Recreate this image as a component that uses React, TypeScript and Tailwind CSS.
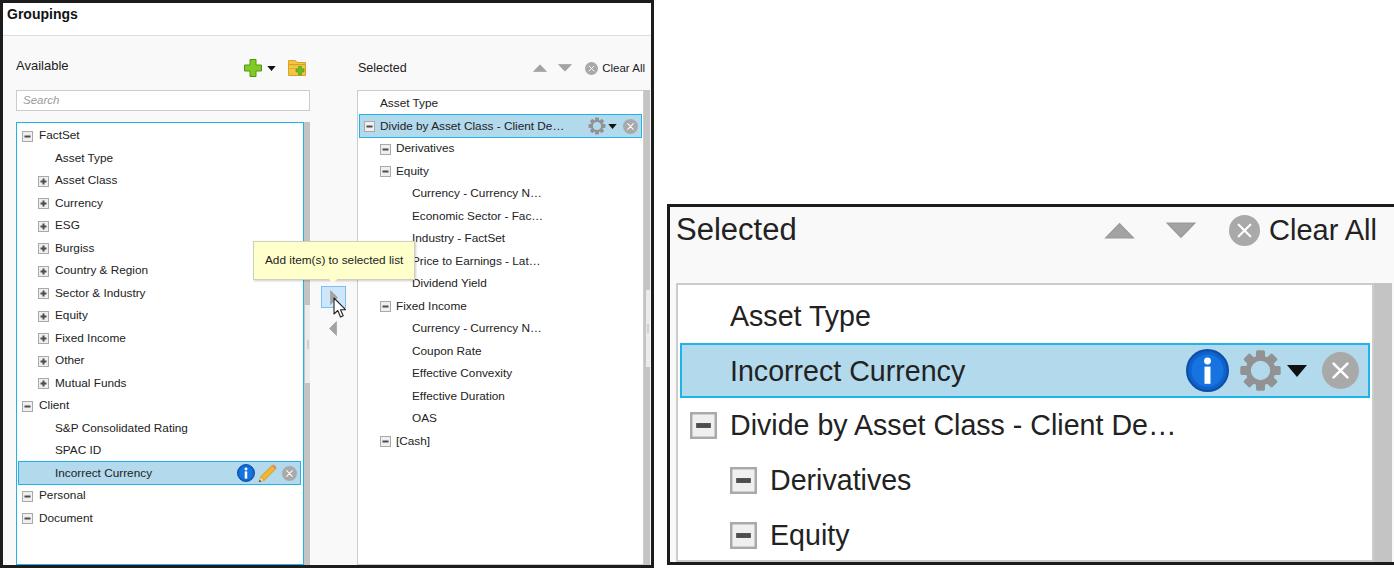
import React from "react";

function Toggle({ open, size = 11 }: { open?: boolean; size?: number }) {
  return (
    <svg width={size} height={size} viewBox="0 0 11 11" className="shrink-0">
      <rect x="0.5" y="0.5" width="10" height="10" fill="#efefef" stroke="#a9a9a9" />
      <rect x="2.5" y="4.5" width="6" height="2" fill="#4d4d4d" />
      {open ? <rect x="4.5" y="2.5" width="2" height="6" fill="#4d4d4d" /> : null}
    </svg>
  );
}

function CloseCircle({ size, fill = "#a9a9a9" }: { size: number; fill?: string }) {
  return (
    <svg width={size} height={size} viewBox="0 0 16 16" className="shrink-0">
      <circle cx="8" cy="8" r="8" fill={fill} />
      <path d="M5 5l6 6M11 5l-6 6" stroke="#fff" strokeWidth="1.1" strokeLinecap="round" />
    </svg>
  );
}

function Info({ size }: { size: number }) {
  return (
    <svg width={size} height={size} viewBox="0 0 20 20" className="shrink-0">
      <circle cx="10" cy="10" r="9.5" fill="#0f62c9" stroke="#0b4fa8" />
      <circle cx="10" cy="10" r="7.5" fill="#1673e0" />
      <rect x="8.6" y="8.2" width="2.8" height="8" fill="#fff" />
      <circle cx="10" cy="5.6" r="1.6" fill="#fff" />
    </svg>
  );
}

function Gear({ size }: { size: number }) {
  const teeth = [0, 45, 90, 135, 180, 225, 270, 315];
  return (
    <svg width={size} height={size} viewBox="0 0 20 20" className="shrink-0">
      {teeth.map((a) => (
        <rect key={a} x="7.9" y="0.6" width="4.2" height="4.4" rx="0.8" fill="#929292" transform={`rotate(${a} 10 10)`} />
      ))}
      <circle cx="10" cy="10" r="5.7" fill="none" stroke="#929292" strokeWidth="2.4" />
    </svg>
  );
}

function Caret({ w, h }: { w: number; h: number }) {
  return (
    <svg width={w} height={h} viewBox="0 0 10 6" className="shrink-0">
      <path d="M0 0H10L5 6Z" fill="#111" />
    </svg>
  );
}

function Tri({ w, h, dir }: { w: number; h: number; dir: "up" | "down" | "left" | "right" }) {
  const d = {
    up: "M0.5 7.5L7 0.8L13.5 7.5Z",
    down: "M0.5 0.5L13.5 0.5L7 7.2Z",
    left: "M7.5 0.5V14.5L0.5 7.5Z",
    right: "M0.5 0.5V14.5L7.5 7.5Z",
  }[dir];
  const box = dir === "up" || dir === "down" ? "0 0 14 8" : "0 0 8 15";
  return (
    <svg width={w} height={h} viewBox={box} className="shrink-0">
      <path d={d} fill="#a3a3a3" stroke="#9a9a9a" strokeWidth="0.6" />
    </svg>
  );
}

function GreenPlus() {
  return (
    <svg width="18" height="18" viewBox="0 0 18 18" className="shrink-0">
      <path d="M6 .5h6v5.5h5.5v6H12v5.5H6V12H.5V6H6Z" fill="#84c928" stroke="#4f9a0c" />
    </svg>
  );
}

function FolderPlus() {
  return (
    <svg width="18" height="18" viewBox="0 0 18 18" className="shrink-0">
      <path d="M.5 1.500h7l1.500 2h8.500v13H.5Z" fill="#f2c544" stroke="#d9a420" />
      <rect x="1" y="5" width="16" height="1.200" fill="#d9a420" />
      <rect x="1" y="9" width="16" height="1" fill="#e0b030" />
      <path d="M10.500 7.500h3v2.500H16v3h-2.500v3h-3v-3H8v-3h2.500Z" fill="#6dbb2a" stroke="#4f9a0c" strokeWidth="0.6" />
    </svg>
  );
}

function Pencil() {
  return (
    <svg width="19" height="19" viewBox="0 0 19 19" className="shrink-0">
      <path d="M14 1.500l3.500 3.500L6 16.500 2.500 13Z" fill="#f4b62c" stroke="#c98a12" strokeWidth="0.7" />
      <path d="M14 1.500l1.700-1 3 3-1.200 1.500Z" fill="#e8807a" />
      <path d="M2.500 13L6 16.500 1 18Z" fill="#f6dfae" stroke="#c98a12" strokeWidth="0.5" />
      <path d="M1 18l.7-2.300 1.600 1.600Z" fill="#333" />
    </svg>
  );
}

function Cursor() {
  return (
    <svg width="14" height="22" viewBox="0 0 14 22">
      <path d="M1 1V17L4.800 13.500L7.500 20L10.200 18.800L7.500 12.700H12.500Z" fill="#fff" stroke="#222" strokeWidth="1.100" strokeLinejoin="round" />
    </svg>
  );
}

type RowProps = { label: string; toggle?: "open" | "closed"; pad: string };

function Row({ label, toggle, pad }: RowProps) {
  return (
    <div className={`flex h-[22.5px] items-center whitespace-nowrap ${pad}`}>
      {toggle ? <Toggle open={toggle === "closed"} /> : null}
      <span>{label}</span>
    </div>
  );
}

const availableGroups = ["Asset Class", "Currency", "ESG", "Burgiss", "Country & Region", "Sector & Industry", "Equity", "Fixed Income", "Other", "Mutual Funds"];

export default function App() {
  return (
    <div className="flex h-[570px] w-[1394px] items-start overflow-hidden bg-white font-['Liberation_Sans',Arial,sans-serif] text-[#222]">
      {/* Main dialog */}
      <div className="relative flex h-[568px] w-[654px] shrink-0 flex-col border-[3px] border-[#1c1c1c] bg-[#f9f9f9]">
        <div className="h-[33px] shrink-0 border-b border-[#dddddd] bg-white pl-[4px] pt-[2px] text-[14px] leading-[18px] font-bold text-[#111]">
          Groupings
        </div>
        <div className="flex min-h-0 flex-1 text-[11.8px]">
          {/* Available */}
          <div className="ml-[13px] flex w-[294px] shrink-0 flex-col pt-[20px]">
            <div className="flex h-[34px] shrink-0 items-start justify-between">
              <span className="text-[13px] leading-[20px]">Available</span>
              <div className="flex items-center pt-[3px]">
                <GreenPlus />
                <span className="ml-[5px] mr-[12px]"><Caret w={9} h={5} /></span>
                <span className="mr-[4px]"><FolderPlus /></span>
              </div>
            </div>
            <div className="flex h-[21px] shrink-0 items-center border border-[#cccccc] bg-white pl-[6px] text-[11.5px] text-[#9a9a9a] italic">
              Search
            </div>
            <div className="mt-[11px] flex min-h-0 flex-1">
              <div className="w-[288px] border border-[#1fb3ea] bg-white pt-[2px]">
                <Row label="FactSet" toggle="open" pad="gap-[6px] pl-[5px]" />
                <Row label="Asset Type" pad="pl-[38px]" />
                {availableGroups.map((g) => (
                  <Row key={g} label={g} toggle="closed" pad="gap-[6px] pl-[21px]" />
                ))}
                <Row label="Client" toggle="open" pad="gap-[6px] pl-[5px]" />
                <Row label="S&P Consolidated Rating" pad="pl-[38px]" />
                <Row label="SPAC ID" pad="pl-[38px]" />
                <div className="-mt-[1.5px] ml-px mr-[2px] flex h-[24px] items-center border border-[#1fb3ea] bg-[#b2d9ec] pl-[36px] pr-[3px]">
                  <span className="flex-1 pt-px">Incorrect Currency</span>
                  <Info size={18} />
                  <span className="ml-[3px]"><Pencil /></span>
                  <span className="ml-[5px]"><CloseCircle size={15} /></span>
                </div>
                <Row label="Personal" toggle="open" pad="gap-[6px] pl-[5px]" />
                <Row label="Document" toggle="open" pad="gap-[6px] pl-[5px]" />
              </div>
              <div className="w-[6px] bg-[#c4c4c4] pl-px pt-[183px]">
                <div className="flex h-[78px] items-center justify-center bg-[#ebebeb]">
                  <div className="h-[9px] w-[2px] bg-[#d0d0d0]" />
                </div>
              </div>
            </div>
          </div>

          {/* Move buttons */}
          <div className="flex w-[47px] shrink-0 flex-col items-start pl-[11px] pt-[250px]">
            <div className="flex h-[22px] w-[25px] items-center justify-center border border-[#7cc0f2] bg-[#cde6fa]">
              <Tri w={8} h={15} dir="right" />
            </div>
            <div className="ml-[8px] mt-[13px]">
              <Tri w={8} h={15} dir="left" />
            </div>
          </div>

          {/* Selected */}
          <div className="flex w-[293px] shrink-0 flex-col pt-[20px]">
            <div className="flex h-[34px] shrink-0 items-start justify-between pl-[1px] pr-[5px] pt-[2px]">
              <span className="text-[12.5px] leading-[20px]">Selected</span>
              <div className="flex items-center pt-[3px]">
                <Tri w={14} h={8} dir="up" />
                <span className="ml-[11px]"><Tri w={14} h={8} dir="down" /></span>
                <span className="ml-[13px]"><CloseCircle size={13} /></span>
                <span className="ml-[4px] text-[11.5px] leading-[14px]">Clear All</span>
              </div>
            </div>
            <div className="flex min-h-0 flex-1">
              <div className="w-[287px] border border-[#cccccc] bg-white pt-[2px]">
                <Row label="Asset Type" pad="pl-[22px]" />
                <div className="-mt-[1.5px] mx-px flex h-[24px] items-center gap-[5px] border border-[#1fb3ea] bg-[#b2d9ec] pl-[4px] pr-[3px]">
                  <Toggle />
                  <span className="flex-1 whitespace-nowrap pt-px">Divide by Asset Class - Client De…</span>
                  <Gear size={18} />
                  <span className="-ml-[3px] mr-[1px]"><Caret w={9} h={5} /></span>
                  <CloseCircle size={15} />
                </div>
                <Row label="Derivatives" toggle="open" pad="gap-[5px] pl-[22px]" />
                <Row label="Equity" toggle="open" pad="gap-[5px] pl-[22px]" />
                <Row label="Currency - Currency N…" pad="pl-[54px]" />
                <Row label="Economic Sector - Fac…" pad="pl-[54px]" />
                <Row label="Industry - FactSet" pad="pl-[54px]" />
                <Row label="Price to Earnings - Lat…" pad="pl-[54px]" />
                <Row label="Dividend Yield" pad="pl-[54px]" />
                <Row label="Fixed Income" toggle="open" pad="gap-[5px] pl-[22px]" />
                <Row label="Currency - Currency N…" pad="pl-[54px]" />
                <Row label="Coupon Rate" pad="pl-[54px]" />
                <Row label="Effective Convexity" pad="pl-[54px]" />
                <Row label="Effective Duration" pad="pl-[54px]" />
                <Row label="OAS" pad="pl-[54px]" />
                <Row label="[Cash]" toggle="open" pad="gap-[5px] pl-[22px]" />
              </div>
              <div className="w-[6px] bg-[#c4c4c4] pl-[2px] pt-[200px]">
                <div className="flex h-[77px] items-center justify-center bg-[#ebebeb]">
                  <div className="h-[9px] w-[2px] bg-[#d0d0d0]" />
                </div>
              </div>
            </div>
          </div>
        </div>

        {/* Tooltip */}
        <div className="absolute left-[250px] top-[238px] flex h-[39px] w-[162px] items-center border border-[#cfcfc0] bg-[#ffffcc] pl-[11px] text-[11.8px] whitespace-nowrap shadow-[1px_1px_2px_rgba(0,0,0,0.2)]">
          Add item(s) to selected list
          <span className="absolute left-[76px] top-[34px] h-[6px] w-[6px] rotate-45 bg-[#ffffcc]" />
        </div>
        <div className="absolute left-[330px] top-[294px]">
          <Cursor />
        </div>
      </div>

      {/* Zoomed inset */}
      <div className="ml-[13px] mt-[204px] flex h-[361px] w-[727px] shrink-0 flex-col overflow-hidden border-[3px] border-r-0 border-[#1c1c1c] bg-[#f9f9f9] text-[28.6px] leading-none">
        <div className="flex h-[76px] shrink-0 items-start justify-between pl-[6px] pr-[17px] pt-[5px]">
          <span className="text-[31px] leading-[36px]">Selected</span>
          <div className="flex items-center">
            <Tri w={33} h={17} dir="up" />
            <span className="ml-[29px]"><Tri w={32} h={17} dir="down" /></span>
            <span className="ml-[32px]"><CloseCircle size={31} /></span>
            <span className="ml-[9px] text-[29px] leading-[36px]">Clear All</span>
          </div>
        </div>
        <div className="ml-[6px] flex min-h-0 flex-1">
          <div className="w-[698px] border-2 border-[#cccccc] bg-white pt-[4px]">
            <div className="flex h-[55px] items-center pl-[52px]">Asset Type</div>
            <div className="mx-[2px] -mt-px flex h-[55px] items-center border-2 border-[#1fb3ea] bg-[#b2d9ec] pl-[48px] pr-[9px]">
              <span className="flex-1 pt-px">Incorrect Currency</span>
              <Info size={43} />
              <span className="ml-[10px]"><Gear size={43} /></span>
              <span className="ml-[5px]"><Caret w={20} h={12} /></span>
              <span className="ml-[15px]"><CloseCircle size={37} /></span>
            </div>
            <div className="flex h-[55px] items-center gap-[13px] pl-[12px]"><Toggle size={27} />Divide by Asset Class - Client De…</div>
            <div className="flex h-[55px] items-center gap-[13px] pl-[52px]"><Toggle size={27} />Derivatives</div>
            <div className="flex h-[55px] items-center gap-[13px] pl-[52px]"><Toggle size={27} />Equity</div>
          </div>
          <div className="w-[18px] bg-[#c4c4c4]" />
        </div>
      </div>
    </div>
  );
}
